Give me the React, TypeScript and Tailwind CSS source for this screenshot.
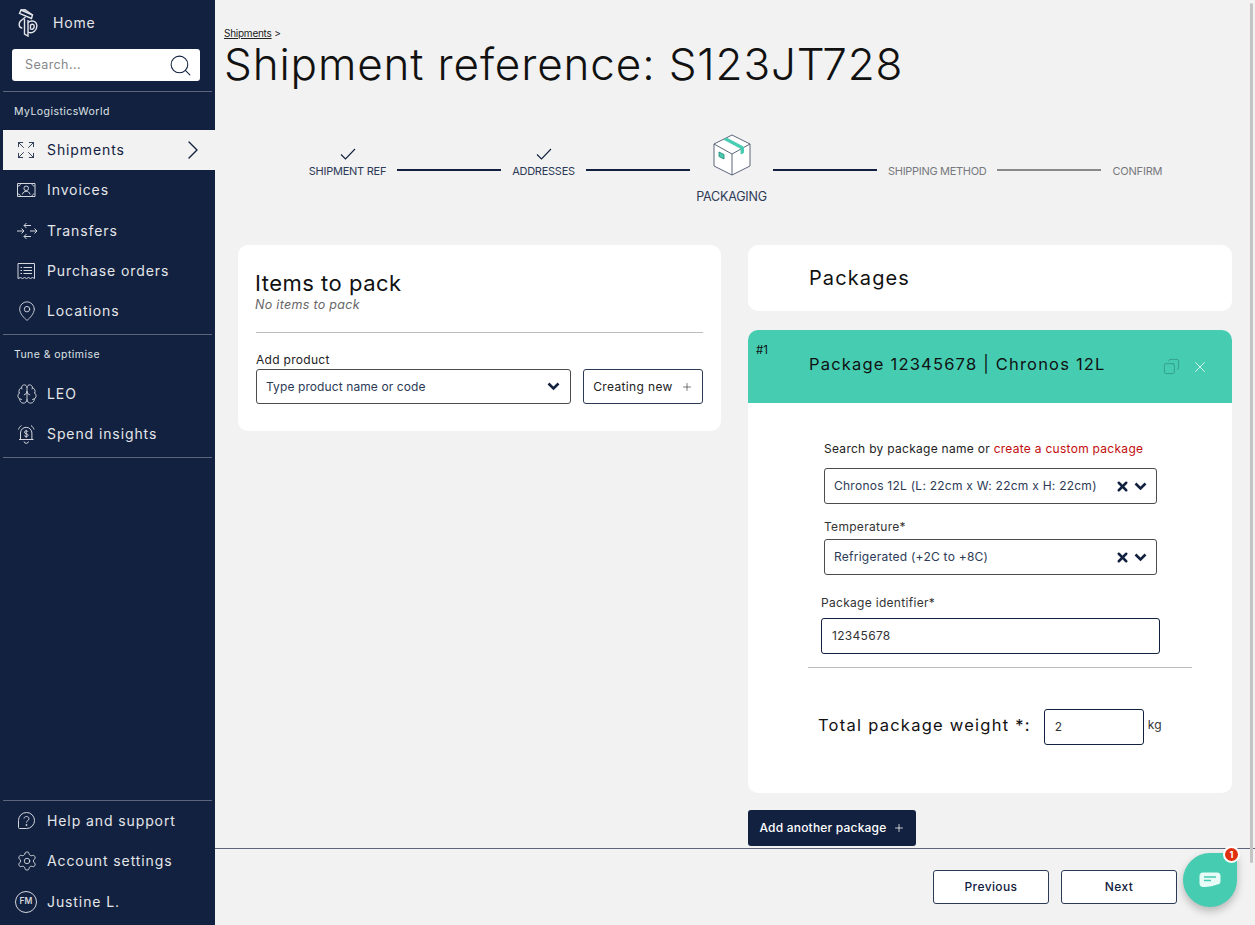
import { Brain, ChevronRight, Copy, Expand, MapPin, Plus, Search, Settings, X } from "lucide-react";
import type { ReactNode } from "react";

const heading = "font-['Inter',sans-serif]";

function InvoiceIcon() {
  return (
    <svg width="20" height="20" viewBox="0 0 20 20" fill="none" stroke="currentColor" strokeWidth="1">
      <path d="M1.500 3.500h17.500v13h-17.500z" />
      <path d="M2 6c1.500 0 2.500-1 2.500-2.500M2 14c1.500 0 2.500 1 2.500 2.500M18.500 6c-1.500 0-2.500-1-2.500-2.500M18.500 14c-1.500 0-2.500 1-2.500 2.500" />
      <circle cx="10.200" cy="8.300" r="2.300" />
      <path d="M6.300 14.500c.5-2.300 2.300-3.200 3.900-3.200s3.400.9 3.900 3.200" />
    </svg>
  );
}

function TransferIcon() {
  return (
    <svg width="22" height="22" viewBox="0 0 22 22" fill="none" stroke="currentColor" strokeWidth="1">
      <path d="M1 11h7M5.500 8.500 8 11l-2.500 2.500" />
      <path d="M14 11h7M18.500 8.500 21 11l-2.500 2.500" />
      <path d="M8 5.500h7M10.500 3 8 5.500 10.500 8" />
      <path d="M8 16.500h7M10.500 14 8 16.500l2.500 2.500" />
    </svg>
  );
}

function ReceiptIcon() {
  return (
    <svg width="20" height="20" viewBox="0 0 20 20" fill="none" stroke="currentColor" strokeWidth="1">
      <path d="M2 2.500h16.500v15l-2-1-2 1-2-1-2 1-2-1-2 1-2-1-2.500 1z" />
      <path d="M4.500 6.500h1.500M7.500 6.500h8.500M4.500 9.500h1.500M7.500 9.500h8.500M4.500 12.500h1.500M7.500 12.500h8.500" />
    </svg>
  );
}

function BellDollarIcon() {
  return (
    <svg width="20" height="20" viewBox="0 0 20 20" fill="none" stroke="currentColor" strokeWidth="1">
      <path d="M4.500 15.500V9a5.700 5.700 0 0 1 11.400 0v6.500z" />
      <path d="M3 15.500h14.500M8 17.500a2.300 2.300 0 0 0 4.500 0" />
      <path d="M2.500 5.500C3 3.800 4 2.500 5.500 1.500M18 5.500c-.5-1.700-1.500-3-3-4" />
      <path d="M12 7.800c-.4-.7-1-1-1.800-1-1 0-1.800.5-1.800 1.400 0 2 3.700 1 3.700 3 0 .9-.8 1.400-1.900 1.400-.8 0-1.500-.4-1.900-1M10.200 5.800v8" />
    </svg>
  );
}

function HelpIcon() {
  return (
    <svg width="20" height="20" viewBox="0 0 20 20" fill="none" stroke="currentColor" strokeWidth="1">
      <path d="M10.500 1.500a8 8 0 1 1 0 16H3.500c-.6 0-1-.4-1-1V9.500a8 8 0 0 1 8-8z" />
      <path d="M8 7.500c.2-1.300 1.200-2 2.500-2 1.400 0 2.500.9 2.500 2.100 0 2-2.500 2-2.500 3.900" />
      <circle cx="10.500" cy="14" r=".6" fill="currentColor" />
    </svg>
  );
}

function Logo() {
  return (
    <svg width="20" height="28" viewBox="0 0 20 28" fill="none" stroke="currentColor" strokeWidth="1.400">
      <path d="M3 1 1.500 4.500l12 5 1-3.500z" />
      <path d="M3 1l4-.3 7.500 5.300" />
      <path d="M7.500 8 4.500 10.500C1.800 12 .8 14 1.300 16.500c.3 1.500 1.500 2.500 3 2.500" />
      <path d="M6.500 10v15l3.500 2V11" />
      <path d="M10 13.500c3-2.500 8-2 8.800 2.500.6 5-4 9.500-8.800 7" />
      <path d="M12.500 16c2-1.500 3.700-.5 3.700 1.500s-2 3.500-3.700 2.500z" />
    </svg>
  );
}

function NavRow({ icon, label, active }: { icon: ReactNode; label: string; active?: boolean }) {
  return (
    <div
      className={
        active
          ? "ml-[3px] flex h-[40px] items-center bg-[#f2f2f2] pr-[6px] pl-[13px] text-[#12213f]"
          : "flex h-[40.400px] items-center pl-4 text-[#e4e6ea]"
      }
    >
      <span className="flex w-[31px] shrink-0 items-center text-[#d3d6dd]">
        <span className={active ? "text-[#12213f]" : ""}>{icon}</span>
      </span>
      <span className={`${heading} -mt-px text-[14px] tracking-[0.900px]`}>{label}</span>
      {active && <ChevronRight className="ml-auto" size={32} strokeWidth={1} />}
    </div>
  );
}

function Sidebar() {
  return (
    <aside className="flex h-full w-[215px] shrink-0 flex-col justify-between bg-[#12213f] font-['Inter',sans-serif]">
      <div>
        <div className="flex h-[45px] items-center pl-[18px] text-[#e4e6ea]">
          <Logo />
          <span className={`${heading} -mt-px ml-[15px] text-[14px] tracking-[0.850px]`}>Home</span>
        </div>
        <div className="mt-1 ml-3 flex h-[32px] w-[188px] items-center justify-between rounded-[3px] bg-white pr-[7px] pl-[13px]">
          <span className="mt-px text-[12.500px] tracking-[0.400px] text-[#85878c]">Search...</span>
          <Search className="text-[#12213f]" size={25} strokeWidth={1} />
        </div>
        <div className="mx-[3px] mt-[10px] h-px bg-[#5c6579]" />
        <p className="mt-[13px] mb-[12px] pl-[14px] text-[10.500px] leading-[13px] tracking-[0.450px] text-[#dfe1e6]">
          MyLogisticsWorld
        </p>
        <NavRow active icon={<Expand size={20} strokeWidth={1} />} label="Shipments" />
        <NavRow icon={<InvoiceIcon />} label="Invoices" />
        <NavRow icon={<TransferIcon />} label="Transfers" />
        <NavRow icon={<ReceiptIcon />} label="Purchase orders" />
        <NavRow icon={<MapPin size={22} strokeWidth={1} />} label="Locations" />
        <div className="mx-[3px] mt-[2px] h-px bg-[#5c6579]" />
        <p className="mt-[13px] mb-[13px] pl-[14px] text-[10.500px] leading-[13px] tracking-[0.450px] text-[#dfe1e6]">
          Tune &amp; optimise
        </p>
        <NavRow icon={<Brain size={22} strokeWidth={1} />} label="LEO" />
        <NavRow icon={<BellDollarIcon />} label="Spend insights" />
        <div className="mx-[3px] mt-[3px] h-px bg-[#5c6579]" />
      </div>
      <div className="pb-[3px]">
        <div className="mx-[3px] h-px bg-[#5c6579]" />
        <NavRow icon={<HelpIcon />} label="Help and support" />
        <NavRow icon={<Settings size={22} strokeWidth={1} />} label="Account settings" />
        <NavRow
          icon={
            <span className="-ml-px flex h-[22px] w-[22px] items-center justify-center rounded-full border border-[#d3d6dd] text-[8.500px] font-semibold">
              FM
            </span>
          }
          label="Justine L."
        />
      </div>
    </aside>
  );
}

function Stepper() {
  const Done = ({ label }: { label: string }) => (
    <div className="flex w-[88px] flex-col items-center">
      <svg width="16" height="12" viewBox="0 0 16 12" fill="none" stroke="#12213f" strokeWidth="1.100">
        <path d="M1 6.500 5.500 11 15 1" />
      </svg>
      <span className="mt-[4px] text-[11px] leading-[14px] tracking-[-0.250px] whitespace-nowrap text-[#2c3a56]">{label}</span>
    </div>
  );
  const Line = ({ on }: { on?: boolean }) => (
    <div className={on ? "mt-[33px] h-[2px] w-[104px] bg-[#12213f]" : "mt-[33px] h-[2px] w-[104px] bg-[#8a8a8a]"} />
  );
  return (
    <div className="mt-[47px] ml-[88.500px] flex h-[70px] items-start font-['Inter',sans-serif]">
      <div className="mt-[12px]"><Done label="SHIPMENT REF" /></div>
      <div className="ml-[5.500px]"><Line on /></div>
      <div className="mt-[12px] ml-[-1.500px]"><Done label="ADDRESSES" /></div>
      <div className="ml-[-1.500px]"><Line on /></div>
      <div className="-mt-[2px] flex w-[83px] flex-col items-center">
        <svg width="38" height="42" viewBox="0 0 38 42" fill="none" stroke="#4b566c" strokeWidth="0.900">
          <path d="M19 1 37 10v22L19 41 1 32V10z" fill="#fff" />
          <path d="M1 10l18 10 18-10M19 20v21" />
          <path d="M11 5.500 28 14.500v5.500l2.500-1.200v-5.800L13.500 4z" fill="#45ccb1" stroke="#45ccb1" />
          <path d="M6 18l5 2.500v4.500L6 22.500z" fill="#45ccb1" stroke="#2f8f7e" />
        </svg>
        <span className="mt-[13px] text-[12.500px] leading-[16px] tracking-[-0.200px] text-[#2c3a56]">PACKAGING</span>
      </div>
      <Line on />
      <span className="mt-[28px] ml-[11px] text-[11px] leading-[14px] tracking-[-0.300px] whitespace-nowrap text-[#77797d]">SHIPPING METHOD</span>
      <div className="ml-[11px]"><Line /></div>
      <span className="mt-[28px] ml-[11px] text-[11px] leading-[14px] tracking-[-0.200px] text-[#77797d]">CONFIRM</span>
    </div>
  );
}

function SelectBox({ value, clear }: { value: string; clear?: boolean }) {
  return (
    <div className="flex h-[36px] items-center rounded-[3px] border border-[#4c4c4c] bg-white pr-[9px] pl-[9px]">
      <span className="flex-1 text-[12px] tracking-[0.250px] whitespace-nowrap text-[#2c3a56]">{value}</span>
      {clear && <X className="mr-[4px] text-[#12213f]" size={15} strokeWidth={4} />}
      <svg width="13" height="9" viewBox="0 0 13 9" fill="none" stroke="#12213f" strokeWidth="2.600">
        <path d="M1.500 1.500 6.500 6.500l5-5" />
      </svg>
    </div>
  );
}

function ItemsCard() {
  return (
    <div className="h-[186px] rounded-[10px] bg-white px-[18px] pt-[25px]">
      <h2 className={`${heading} -ml-px text-[22px] leading-[26px] tracking-[0.500px] text-[#111]`}>Items to pack</h2>
      <p className="-ml-px mt-[1px] text-[12.500px] leading-[16px] tracking-[0.300px] text-[#666] italic">No items to pack</p>
      <div className="mt-[19px] h-px bg-[#bdbdbd]" />
      <p className="mt-[20px] text-[12px] leading-[14px] tracking-[0.300px] text-[#222]">Add product</p>
      <div className="mt-[2px] flex gap-[12px]">
        <div className="flex h-[35px] flex-1 items-center rounded-[3px] border border-[#4c4c4c] pr-[10px] pl-[9px]">
          <span className="flex-1 text-[12px] tracking-[0.100px] text-[#2c3a56]">Type product name or code</span>
          <svg width="13" height="9" viewBox="0 0 13 9" fill="none" stroke="#12213f" strokeWidth="2.600">
            <path d="M1.500 1.500 6.500 6.500l5-5" />
          </svg>
        </div>
        <button className="flex h-[35px] w-[120px] items-center justify-center gap-[8px] rounded-[3px] border border-[#2c3a56] text-[12px] tracking-[0.350px] text-[#222]">
          Creating new <Plus size={12} strokeWidth={1.200} />
        </button>
      </div>
    </div>
  );
}

function PackagesColumn() {
  return (
    <div className="flex flex-col">
      <div className="flex h-[66px] items-center rounded-[10px] bg-white pl-[61px]">
        <h2 className={`${heading} text-[20px] tracking-[1.100px] text-[#111]`}>Packages</h2>
      </div>
      <div className="mt-[19px] h-[463px] rounded-[10px] bg-white">
        <div className="relative flex h-[73px] items-center rounded-t-[10px] bg-[#45ccb1] pr-[23px] pl-[61px]">
          <span className="absolute top-[13px] left-[8px] text-[11.500px] leading-[14px] text-[#111]">#1</span>
          <h3 className={`${heading} mb-[4px] flex-1 text-[16.500px] font-normal tracking-[1.200px] text-[#111]`}>Package 12345678 | Chronos 12L</h3>
          <Copy className="mr-[11px] -scale-x-100 text-[#2f8f7e]" size={17} strokeWidth={1} />
          <X className="text-white" size={18} strokeWidth={1} />
        </div>
        <div className="flex flex-col items-stretch pt-[38px]">
          <p className="mr-[75px] ml-[76px] text-[12px] leading-[16px] tracking-[0.280px] text-[#222]">
            Search by package name or <span className="text-[#c10d0d]">create a custom package</span>
          </p>
          <div className="mt-[11px] mr-[75px] ml-[76px]"><SelectBox value="Chronos 12L (L: 22cm x W: 22cm x H: 22cm)" clear /></div>
          <p className="mt-[15px] mr-[75px] ml-[76px] text-[12px] leading-[16px] tracking-[0.300px] text-[#333]">Temperature*</p>
          <div className="mt-[4px] mr-[75px] ml-[76px]"><SelectBox value="Refrigerated (+2C to +8C)" clear /></div>
          <p className="mt-[20px] mr-[72px] ml-[73px] text-[12px] leading-[16px] tracking-[0.300px] text-[#333]">Package identifier*</p>
          <div className="mt-[7px] mr-[72px] ml-[73px] flex h-[36px] items-center rounded-[3px] border border-[#12213f] px-[10px] text-[12px] tracking-[0.300px] text-[#333]">
            12345678
          </div>
          <div className="mt-[13px] mr-[40px] ml-[60px] h-px bg-[#bdbdbd]" />
          <div className="mt-[41px] flex items-center pl-[70px]">
            <span className={`${heading} mb-[4px] text-[16.500px] font-normal tracking-[1.250px] text-[#111]`}>Total package weight *:</span>
            <div className="ml-[13px] flex h-[36px] w-[100px] items-center rounded-[3px] border border-[#12213f] px-[10px] text-[12px] text-[#333]">2</div>
            <span className="mb-[4px] ml-[4px] text-[12px] tracking-[0.200px] text-[#333]">kg</span>
          </div>
        </div>
      </div>
      <button className="mt-[17px] flex h-[36px] w-[168px] items-center justify-center gap-[6px] rounded-[3px] bg-[#12213f] text-[12px] font-medium tracking-[0.200px] text-white">
        Add another package <Plus size={12} strokeWidth={1.500} />
      </button>
    </div>
  );
}

export default function App() {
  return (
    <div className="relative flex h-[925px] overflow-hidden bg-[#f2f2f2] font-['Inter',sans-serif]">
      <Sidebar />
      <main className="relative flex flex-1 flex-col">
        <div className="flex-1 pt-[27px]">
          <div className="pl-[9px]">
            <p className="text-[10px] leading-[12px] tracking-[-0.250px] text-[#222]">
              <span className="underline">Shipments</span> &gt;
            </p>
            <h1 className={`${heading} text-[44px] leading-[50px] font-light tracking-[0.870px] text-[#111]`}>
              Shipment reference: S123JT728
            </h1>
          </div>
          <Stepper />
          <div className="mt-[39px] grid grid-cols-[483px_484px] gap-[27px] pl-[23px]">
            <div>
              <ItemsCard />
            </div>
            <PackagesColumn />
          </div>
        </div>
        <div className="flex h-[77px] shrink-0 justify-end gap-[12px] border-t border-[#5c6579] pt-[21px] pr-[78px]">
          <button className="h-[34px] w-[116px] rounded-[3px] border border-[#2c3a56] bg-white text-[12px] font-medium tracking-[0.400px] text-[#12213f]">Previous</button>
          <button className="h-[34px] w-[116px] rounded-[3px] border border-[#2c3a56] bg-white text-[12px] font-medium tracking-[0.400px] text-[#12213f]">Next</button>
        </div>
        <div className="absolute top-[3px] right-[2px] h-[860px] w-[3px] rounded-full bg-[#c4c4c4]" />
        <div className="absolute right-[18px] bottom-[18px] flex h-[54px] w-[54px] items-center justify-center rounded-full rounded-tr-[6px] bg-[#45ccb1] shadow-[0_4px_8px_rgba(0,0,0,0.25)]">
          <svg width="22" height="16" viewBox="0 0 22 16">
            <path d="M4 .5h14a3.500 3.500 0 0 1 3.500 3.500v5a3.500 3.500 0 0 1-3.500 3.500c-2 1-8 2.500-14 2.500-2 0-3.500-1.500-3.500-3.500V4A3.500 3.500 0 0 1 4 .5z" fill="#e8fbf6" />
            <path d="M5 5h12M5 8.500h7" stroke="#45ccb1" strokeWidth="1.500" />
          </svg>
          <span className="absolute -top-[7px] -right-[3px] flex h-[17px] w-[17px] items-center justify-center rounded-full border-2 border-white bg-[#e0300f] text-[9px] font-bold text-white">
            1
          </span>
        </div>
      </main>
    </div>
  );
}
